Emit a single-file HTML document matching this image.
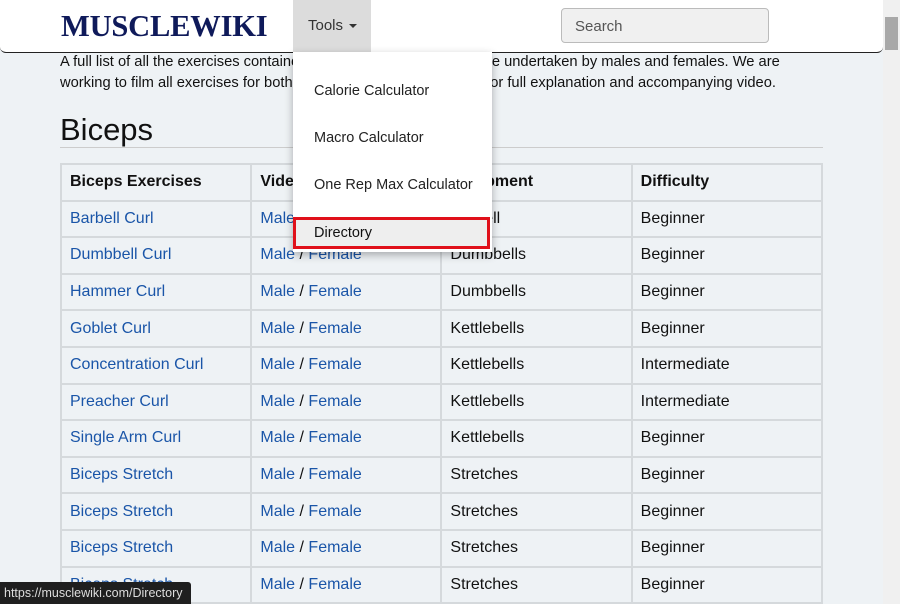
<!DOCTYPE html>
<html><head><style>
*{box-sizing:border-box;margin:0;padding:0}
body{width:900px;height:604px;overflow:hidden;background:#eef2f5;font-family:"Liberation Sans",Arial,sans-serif;position:relative;color:#111}
.hdr{position:absolute;left:0;top:0;width:883px;height:53px;background:#fff;border-bottom:1.5px solid #222;border-radius:0 0 6px 6px}
.logo{position:absolute;left:61px;top:9px;font-family:"Liberation Serif",serif;font-weight:bold;font-size:30.5px;color:#0f1a5a;letter-spacing:-0.2px}
.tools{position:absolute;left:293px;top:0;width:78px;height:52px;background:#dcdcdc;font-size:15px;color:#333;padding:17px 0 0 15px}
.caret{display:inline-block;width:0;height:0;border-left:4px solid transparent;border-right:4px solid transparent;border-top:4px solid #333;vertical-align:middle;margin-left:6px}
.search{position:absolute;left:561px;top:8px;width:208px;height:35px;background:#f0f0f0;border:1px solid #bbb;border-radius:4px;font-size:15px;color:#555;padding:9px 13px}
.sb{position:absolute;left:883px;top:0;width:17px;height:604px;background:#f0f0f0}
.thumb{position:absolute;left:885px;top:17px;width:13px;height:33px;background:#a8a8a8}
p.intro{position:absolute;left:60px;top:52px;width:800px;font-size:14.7px;line-height:21px;white-space:nowrap}
h1{position:absolute;left:60px;top:112px;font-weight:normal;font-size:31px}
.hr{position:absolute;left:60px;top:147px;width:763px;border-top:1px solid #ccc}
table{position:absolute;left:60px;top:163px;border-collapse:collapse;width:763px;font-size:16px}
td,th{border:2px solid #d5d9dc;height:36.6px;padding:0 8px;text-align:left;width:191px}
th{font-weight:bold}
a{color:#1a55a8;text-decoration:none}
.dd{position:absolute;left:293px;top:52px;width:199px;height:200px;background:#fff;box-shadow:0 3px 8px rgba(0,0,0,.3);font-size:14.5px;color:#222}
.dd div{position:absolute;left:21px}
.dir{position:absolute;left:293px;top:217px;width:197px;height:32px;background:#eee;border:3px solid #e0101a;font-size:14.5px;padding:5px 0 0 18px}
.status{position:absolute;left:0;top:582px;width:191px;height:22px;background:#1f1f1f;color:#ddd;font-size:12.5px;padding:4px 0 0 4px;border-radius:0 3px 0 0}
</style></head><body>
<p class="intro">A full list of all the exercises contained on MuscleWiki, which can be undertaken by males and females. We are<br>working to film all exercises for both genders. Click on it, directed for full explanation and accompanying video.</p>
<h1>Biceps</h1><div class="hr"></div>
<table>
<tr><th>Biceps Exercises</th><th>Videos</th><th>Equipment</th><th>Difficulty</th></tr>
<tr><td><a>Barbell Curl</a></td><td><a>Male</a> / <a>Female</a></td><td>Barbell</td><td>Beginner</td></tr>
<tr><td><a>Dumbbell Curl</a></td><td><a>Male</a> / <a>Female</a></td><td>Dumbbells</td><td>Beginner</td></tr>
<tr><td><a>Hammer Curl</a></td><td><a>Male</a> / <a>Female</a></td><td>Dumbbells</td><td>Beginner</td></tr>
<tr><td><a>Goblet Curl</a></td><td><a>Male</a> / <a>Female</a></td><td>Kettlebells</td><td>Beginner</td></tr>
<tr><td><a>Concentration Curl</a></td><td><a>Male</a> / <a>Female</a></td><td>Kettlebells</td><td>Intermediate</td></tr>
<tr><td><a>Preacher Curl</a></td><td><a>Male</a> / <a>Female</a></td><td>Kettlebells</td><td>Intermediate</td></tr>
<tr><td><a>Single Arm Curl</a></td><td><a>Male</a> / <a>Female</a></td><td>Kettlebells</td><td>Beginner</td></tr>
<tr><td><a>Biceps Stretch</a></td><td><a>Male</a> / <a>Female</a></td><td>Stretches</td><td>Beginner</td></tr>
<tr><td><a>Biceps Stretch</a></td><td><a>Male</a> / <a>Female</a></td><td>Stretches</td><td>Beginner</td></tr>
<tr><td><a>Biceps Stretch</a></td><td><a>Male</a> / <a>Female</a></td><td>Stretches</td><td>Beginner</td></tr>
<tr><td><a>Biceps Stretch</a></td><td><a>Male</a> / <a>Female</a></td><td>Stretches</td><td>Beginner</td></tr>
</table>
<div class="hdr"><div class="logo">MUSCLEWIKI</div><div class="search">Search</div></div>
<div class="tools">Tools<span class="caret"></span></div>
<div class="dd"><div style="top:31px">Calorie Calculator</div><div style="top:78px">Macro Calculator</div><div style="top:125px">One Rep Max Calculator</div></div>
<div class="dir">Directory</div>
<div class="sb"></div><div class="thumb"></div>
<div class="status">https://musclewiki.com/Directory</div>
</body></html>
